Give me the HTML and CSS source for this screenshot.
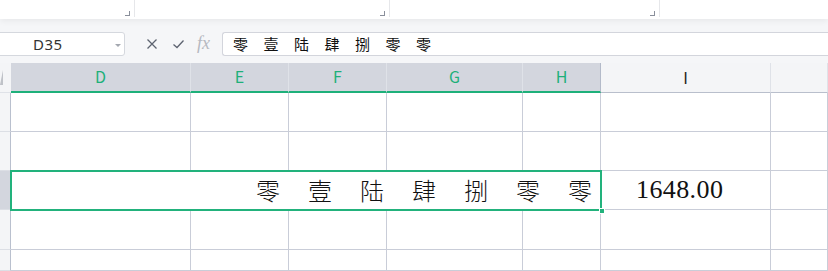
FILE: index.html
```html
<!DOCTYPE html>
<html>
<head>
    <meta charset="utf-8">
    <title>Sheet</title>
    <link rel="stylesheet" href="styles.css">
</head>
<body>
    <div class="ribbon">
        <div class="group g1"><span class="corner"></span></div>
        <div class="group g2"><span class="corner"></span></div>
        <div class="group g3"><span class="corner"></span></div>
        <div class="group g4"></div>
    </div>

    <div class="formula-bar">
        <div class="name-box">
            <span class="name">D35</span>
            <span class="caret"></span>
        </div>
        <div class="tools">
            <svg class="icon" width="12" height="12" viewBox="0 0 12 12">
                <path d="M1.5 1.5 L10.5 10.5 M10.5 1.5 L1.5 10.5" stroke="#5d6370" stroke-width="1.3" fill="none"/>
            </svg>
            <svg class="icon" width="13" height="12" viewBox="0 0 13 12">
                <path d="M1.5 6.5 L5 9.5 L11.5 2.5" stroke="#5d6370" stroke-width="1.3" fill="none"/>
            </svg>
            <span class="fx">fx</span>
        </div>
        <div class="formula-input">零壹陆肆捌零零</div>
    </div>

    <div class="sheet">
        <div class="hd corner-cell"><span class="tri"></span></div>
        <div class="hd sel">D</div>
        <div class="hd sel">E</div>
        <div class="hd sel">F</div>
        <div class="hd sel">G</div>
        <div class="hd sel last">H</div>
        <div class="hd">I</div>
        <div class="hd"></div>

        <div class="rh"></div>
        <div class="c"></div><div class="c"></div><div class="c"></div><div class="c"></div><div class="c"></div><div class="c"></div><div class="c"></div>

        <div class="rh"></div>
        <div class="c"></div><div class="c"></div><div class="c"></div><div class="c"></div><div class="c"></div><div class="c"></div><div class="c"></div>

        <div class="rh active"></div>
        <div class="c merged"><span class="capital">零壹陆肆捌零零</span></div>
        <div class="c amount">1648.00</div>
        <div class="c"></div>

        <div class="rh"></div>
        <div class="c"></div><div class="c"></div><div class="c"></div><div class="c"></div><div class="c"></div><div class="c"></div><div class="c"></div>

        <div class="rh"></div>
        <div class="c"></div><div class="c"></div><div class="c"></div><div class="c"></div><div class="c"></div><div class="c"></div><div class="c"></div>
    </div>
</body>
</html>
```

FILE: styles.css
```css
*, *::before, *::after {
    box-sizing: border-box;
}

body {
    margin: 0;
    background: #f5f6f8;
    font-family: "Noto Sans", "Noto Sans CJK SC", sans-serif;
    color: #222;
    width: 828px;
    height: 271px;
    overflow: hidden;
}

/* ribbon strip at the top */
.ribbon {
    height: 19px;
    background: #fff;
    display: flex;
    box-shadow: 0 2px 6px rgba(0, 0, 0, 0.06);
    position: relative;
}

.group {
    height: 17px;
    border-right: 1px solid #e6e7ea;
    position: relative;
}

.g1 { width: 135px; }
.g2 { width: 255px; }
.g3 { width: 270px; }
.g4 { flex: 1; border-right: none; }

.corner {
    position: absolute;
    right: 4px;
    top: 11px;
    width: 5px;
    height: 5px;
    border-right: 1px solid #8a8f9b;
    border-bottom: 1px solid #8a8f9b;
}

/* formula bar */
.formula-bar {
    margin-top: 13px;
    height: 24px;
    display: flex;
    align-items: stretch;
}

.name-box {
    margin-left: -3px;
    width: 128px;
    background: #fff;
    border: 1px solid #d5d8de;
    border-radius: 3px;
    display: flex;
    align-items: center;
    position: relative;
}

.name {
    padding-left: 35px;
    font-size: 15px;
    color: #333;
    letter-spacing: 0.5px;
}

.caret {
    position: absolute;
    right: 3px;
    top: 11px;
    border-left: 3px solid transparent;
    border-right: 3px solid transparent;
    border-top: 3px solid #a4a8b0;
}

.tools {
    width: 97px;
    display: flex;
    align-items: center;
    padding-left: 21px;
    gap: 14px;
}

.fx {
    font-family: "Liberation Serif", serif;
    font-style: italic;
    font-size: 18px;
    color: #b5b9c1;
    margin-left: -2px;
    margin-top: -2px;
}

.formula-input {
    flex: 1;
    background: #fff;
    border: 1px solid #d3d5dc;
    border-right: none;
    border-radius: 3px 0 0 3px;
    font-family: "Noto Sans CJK SC", sans-serif;
    font-size: 15px;
    letter-spacing: 15.5px;
    line-height: 21px;
    padding-left: 10px;
    color: #111;
}

/* sheet grid */
.sheet {
    margin-top: 7px;
    display: grid;
    grid-template-columns: 11px 180px 98px 98px 136px 78px 170px 1fr;
    grid-template-rows: 30px 39px 39px 39px 40px 21px;
    background: #fff;
}

.hd {
    background: #f4f5f7;
    border-right: 1px solid #dfe2e8;
    border-bottom: 1px solid #b9bfcc;
    display: flex;
    align-items: center;
    justify-content: center;
    font-family: "Noto Sans CJK SC", sans-serif;
    font-size: 16px;
    color: #222;
    padding-bottom: 2px;
}

.hd.sel {
    background: #d3d6de;
    color: #1eb07a;
    border-bottom: 2px solid #1eb07a;
}

.hd.last {
    border-right-color: #b3bac9;
}

.corner-cell {
    border-right: none;
    border-bottom: 1px solid #dfe2e8;
    justify-content: flex-start;
    align-items: flex-start;
}

.tri {
    margin-top: 7px;
    width: 0;
    height: 0;
    border-bottom: 15px solid #bfc2c8;
    border-left: 3px solid transparent;
}

.rh {
    background: #f4f5f7;
    border-right: 1px solid #b9c0ce;
    border-bottom: 1px solid #dcdfe5;
}

.rh.active {
    background: #d3d6de;
}

.c {
    border-right: 1px solid #c9cdd8;
    border-bottom: 1px solid #c9cdd8;
}

.merged {
    grid-column: 2 / 7;
    position: relative;
    display: flex;
    align-items: center;
    justify-content: flex-end;
    padding-right: 8px;
}

.merged::before {
    content: "";
    position: absolute;
    left: -1px;
    top: -1px;
    width: 592px;
    height: 41px;
    border: 2px solid #22b27c;
}

.merged::after {
    content: "";
    position: absolute;
    left: 588px;
    top: 37px;
    width: 6px;
    height: 6px;
    background: #22b27c;
    border: 1px solid #fff;
}

.capital {
    font-family: "Noto Sans CJK SC", sans-serif;
    font-weight: 300;
    font-size: 24px;
    letter-spacing: 28px;
    margin-right: -28px;
    color: #111;
    line-height: 1;
}

.amount {
    display: flex;
    align-items: center;
    padding-left: 35px;
    font-family: "Liberation Serif", serif;
    font-size: 26px;
    letter-spacing: 0.4px;
    color: #111;
}
```
